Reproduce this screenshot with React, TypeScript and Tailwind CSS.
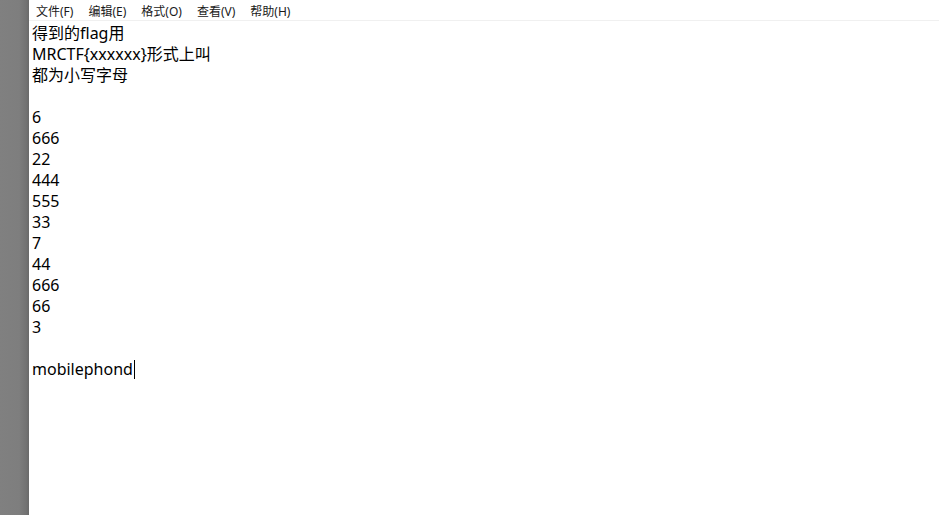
const menus = ['文件(F)', '编辑(E)', '格式(O)', '查看(V)', '帮助(H)'];

const lines = [
  '得到的flag用',
  'MRCTF{xxxxxx}形式上叫',
  '都为小写字母',
  '',
  '6',
  '666',
  '22',
  '444',
  '555',
  '33',
  '7',
  '44',
  '666',
  '66',
  '3',
  '',
];

export default function App() {
  return (
    <div className="flex h-[515px] w-[939px] overflow-hidden bg-white">
      <div className="w-[29px] shrink-0 bg-[linear-gradient(to_right,#808080_0px,#7e7e7e_19px,#737373_26px,#6a6a6a_29px)]" />
      <div className="flex min-w-0 flex-1 flex-col">
        <div className="flex h-[21px] items-center gap-[15px] border-b border-[#f0f0f0] pl-[7px] pt-[3px] font-['Noto_Sans','Noto_Sans_CJK_SC',sans-serif] text-[12px] text-[#1a1a1a]">
          {menus.map((m) => (
            <span key={m} className="leading-none">
              {m}
            </span>
          ))}
        </div>
        <div className="pl-[3px] pt-[2px] font-['Noto_Sans','Noto_Sans_CJK_SC',sans-serif] text-[16px] leading-[21px] text-black">
          {lines.map((l, i) => (
            <div key={i} className="h-[21px] whitespace-pre">
              {l}
            </div>
          ))}
          <div className="flex h-[21px] items-center">
            <span>mobilephond</span>
            <span className="ml-[1px] inline-block h-[19px] w-px bg-black" />
          </div>
        </div>
      </div>
    </div>
  );
}
